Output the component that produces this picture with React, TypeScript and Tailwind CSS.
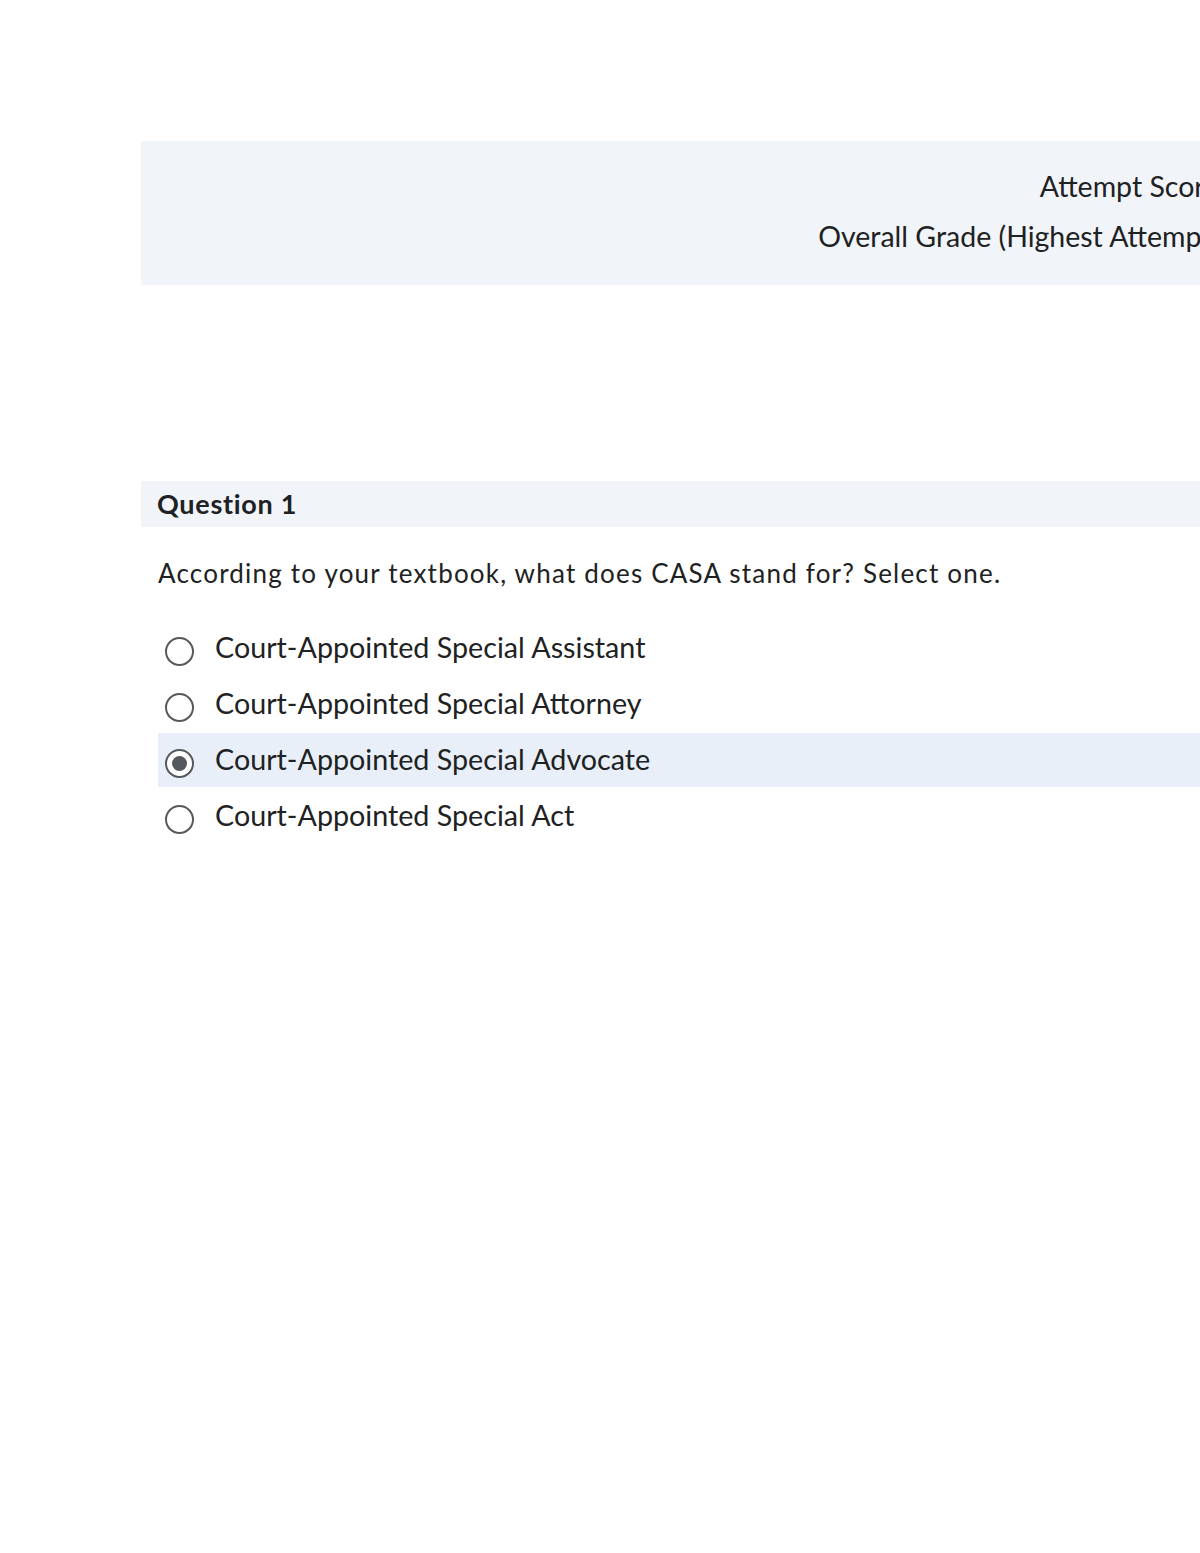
import React from 'react';

const options = [
  'Court-Appointed Special Assistant',
  'Court-Appointed Special Attorney',
  'Court-Appointed Special Advocate',
  'Court-Appointed Special Act',
];

function Radio({ checked }: { checked: boolean }) {
  return (
    <span className="mt-[6px] flex h-[29px] w-[29px] shrink-0 items-center justify-center rounded-full border-[2px] border-[#55595c] bg-white">
      {checked && <span className="h-[15px] w-[15px] rounded-full bg-[#55595d]" />}
    </span>
  );
}

export default function App() {
  const selected = 2;

  return (
    <div className="min-h-[1553px] w-[1200px] overflow-hidden bg-white font-['Lato',sans-serif] text-[#202122]">
      <div className="pl-[141px] pt-[141px]">
        <div className="flex h-[144px] w-[1300px] flex-col items-end justify-center gap-[14px] bg-[#f1f4f9] pb-[4px] pr-[42px] text-[28.5px] leading-[36px]">
          <div>Attempt Score: 1 / 1 - 100 %</div>
          <div>Overall Grade (Highest Attempt): 1 / 1 - 100 %</div>
        </div>

        <div className="mt-[196px] flex h-[46px] w-[1100px] items-center bg-[#f1f4f9] pl-[16px] text-[27px] font-bold tracking-[0.7px]">
          Question 1
        </div>

        <p className="mt-[28px] pl-[17px] text-[26px] leading-[36px] tracking-[1.2px]">
          According to your textbook, what does CASA stand for? Select one.
        </p>

        <div className="mt-[30px] flex flex-col gap-[2px] pl-[17px]">
          {options.map((o, i) => (
            <label
              key={o}
              className={`flex h-[54px] w-[1100px] items-center gap-[21px] pl-[7px] text-[28.7px] ${
                i === selected ? 'bg-[#e8eff8]' : ''
              }`}
            >
              <Radio checked={i === selected} />
              <span>{o}</span>
            </label>
          ))}
        </div>
      </div>
    </div>
  );
}
